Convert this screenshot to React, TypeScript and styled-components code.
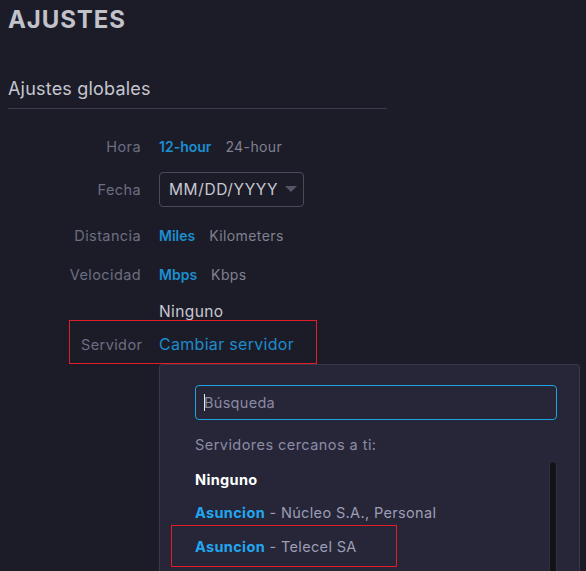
import styled, { createGlobalStyle } from "styled-components";

const GlobalStyle = createGlobalStyle`
  html, body {
    margin: 0;
    background: #1c1c29;
    overflow: hidden;
  }
  body {
    font-family: Inter, "Noto Sans", "DejaVu Sans", sans-serif;
    color: #c6c6ce;
  }
`;

const Page = styled.div`
  padding: 0 8px;
  height: 571px;
`;

const Title = styled.h1`
  margin: 0;
  padding-top: 5px;
  font-size: 24px;
  line-height: 30px;
  font-weight: 700;
  color: #c2c2ca;
  letter-spacing: 0.9px;
`;

const SectionTitle = styled.h2`
  width: 379px;
  margin: 42px 0 0;
  padding-bottom: 7px;
  font-size: 18px;
  line-height: 24px;
  font-weight: 400;
  color: #c6c6ce;
  letter-spacing: 0.2px;
  border-bottom: 1px solid #3d3d4d;
`;

const Rows = styled.div`
  display: flex;
  flex-direction: column;
  margin-top: 19px;
`;

const Row = styled.div<{ $top?: number; $height?: number }>`
  display: grid;
  grid-template-columns: 133px 1fr;
  column-gap: 18px;
  align-items: center;
  min-height: ${(p) => p.$height ?? 36}px;
  margin-top: ${(p) => p.$top ?? 0}px;
`;

const Label = styled.span`
  text-align: right;
  font-size: 14.5px;
  letter-spacing: 0.4px;
  color: #6c6e80;
`;

const Options = styled.div`
  display: flex;
  gap: 14px;
  font-size: 14px;
`;

const Option = styled.span<{ $active?: boolean }>`
  color: ${(p) => (p.$active ? "#1b8fd0" : "#80808f")};
  font-weight: ${(p) => (p.$active ? 600 : 400)};
  letter-spacing: ${(p) => (p.$active ? 0 : 0.4)}px;
`;

const Select = styled.div`
  display: inline-flex;
  align-items: center;
  gap: 7px;
  width: 145px;
  height: 35px;
  box-sizing: border-box;
  padding: 0 6px 0 9px;
  border: 1px solid #4a4a5a;
  border-radius: 4px;
  font-size: 15.5px;
  letter-spacing: 0.6px;
  color: #c8c8d0;
  white-space: nowrap;
`;

const Caret = styled.span`
  width: 0;
  height: 0;
  border-left: 6px solid transparent;
  border-right: 6px solid transparent;
  border-top: 6px solid #55556a;
`;

const Current = styled.span`
  font-size: 15.5px;
  line-height: 16px;
  letter-spacing: 0.4px;
  color: #c8c8d0;
`;

const Highlight = styled.div`
  display: grid;
  grid-template-columns: 60px auto;
  column-gap: 18px;
  align-items: center;
  width: 248px;
  height: 44px;
  box-sizing: border-box;
  margin-left: 61px;
  padding: 4px 0 0 11px;
  border: 1px solid #e01e2a;
`;

const ChangeLink = styled.span`
  font-size: 16px;
  letter-spacing: 0.3px;
  color: #1c8ccb;
  white-space: nowrap;
`;

const Panel = styled.div`
  width: 421px;
  height: 240px;
  box-sizing: border-box;
  margin-left: 151px;
  padding: 20px 22px 0 35px;
  background: #262638;
  border: 1px solid #38384a;
  border-bottom: none;
  border-radius: 4px 4px 0 0;
`;

const Search = styled.div`
  display: flex;
  align-items: center;
  height: 35px;
  box-sizing: border-box;
  padding-left: 8px;
  border: 1px solid #1ea2e0;
  border-radius: 4px;
  font-size: 14.5px;
  letter-spacing: 0.3px;
  color: #8a8aa2;
`;

const Cursor = styled.span`
  width: 1px;
  height: 17px;
  margin-right: -1px;
  background: #e8e8f0;
`;

const NearLabel = styled.div`
  margin-top: 16px;
  font-size: 14.5px;
  letter-spacing: 0.45px;
  color: #8c8ca6;
`;

const ListArea = styled.div`
  display: flex;
  margin-top: 8px;
`;

const List = styled.div`
  flex: 1;
  display: flex;
  flex-direction: column;
  padding-top: 2px;
`;

const Item = styled.div<{ $marked?: boolean }>`
  display: flex;
  align-items: center;
  height: ${(p) => (p.$marked ? 42 : 33)}px;
  font-size: 14.5px;
  letter-spacing: 0.35px;
  color: #9d9db5;
  ${(p) =>
    p.$marked &&
    `
    width: 226px;
    box-sizing: border-box;
    margin: -4px 0 0 -24px;
    padding-left: 23px;
    border: 1px solid #e01e2a;
  `}
`;

const None = styled.span`
  font-weight: 700;
  color: #ffffff;
`;

const City = styled.span`
  font-weight: 700;
  color: #22a6f2;
`;

const ScrollTrack = styled.div`
  width: 8px;
  height: 140px;
  box-sizing: border-box;
  background: #121219;
  border: 1px solid #30303f;
  border-radius: 4px;
`;

export default function App() {
  return (
    <>
      <GlobalStyle />
      <Page>
        <Title>AJUSTES</Title>
        <SectionTitle>Ajustes globales</SectionTitle>
        <Rows>
          <Row>
            <Label>Hora</Label>
            <Options>
              <Option $active>12-hour</Option>
              <Option>24-hour</Option>
            </Options>
          </Row>
          <Row $top={7}>
            <Label>Fecha</Label>
            <div>
              <Select>
                MM/DD/YYYY <Caret />
              </Select>
            </div>
          </Row>
          <Row $top={10}>
            <Label>Distancia</Label>
            <Options>
              <Option $active>Miles</Option>
              <Option>Kilometers</Option>
            </Options>
          </Row>
          <Row $top={3}>
            <Label>Velocidad</Label>
            <Options>
              <Option $active>Mbps</Option>
              <Option>Kbps</Option>
            </Options>
          </Row>
          <Row $top={12} $height={16}>
            <span />
            <Current>Ninguno</Current>
          </Row>
          <Highlight>
            <Label>Servidor</Label>
            <ChangeLink>Cambiar servidor</ChangeLink>
          </Highlight>
        </Rows>
        <Panel>
          <Search>
            <Cursor />
            Búsqueda
          </Search>
          <NearLabel>Servidores cercanos a ti:</NearLabel>
          <ListArea>
            <List>
              <Item>
                <None>Ninguno</None>
              </Item>
              <Item>
                <City>Asuncion</City>&nbsp;- Núcleo S.A., Personal
              </Item>
              <Item $marked>
                <City>Asuncion</City>&nbsp;- Telecel SA
              </Item>
            </List>
            <ScrollTrack />
          </ListArea>
        </Panel>
      </Page>
    </>
  );
}
